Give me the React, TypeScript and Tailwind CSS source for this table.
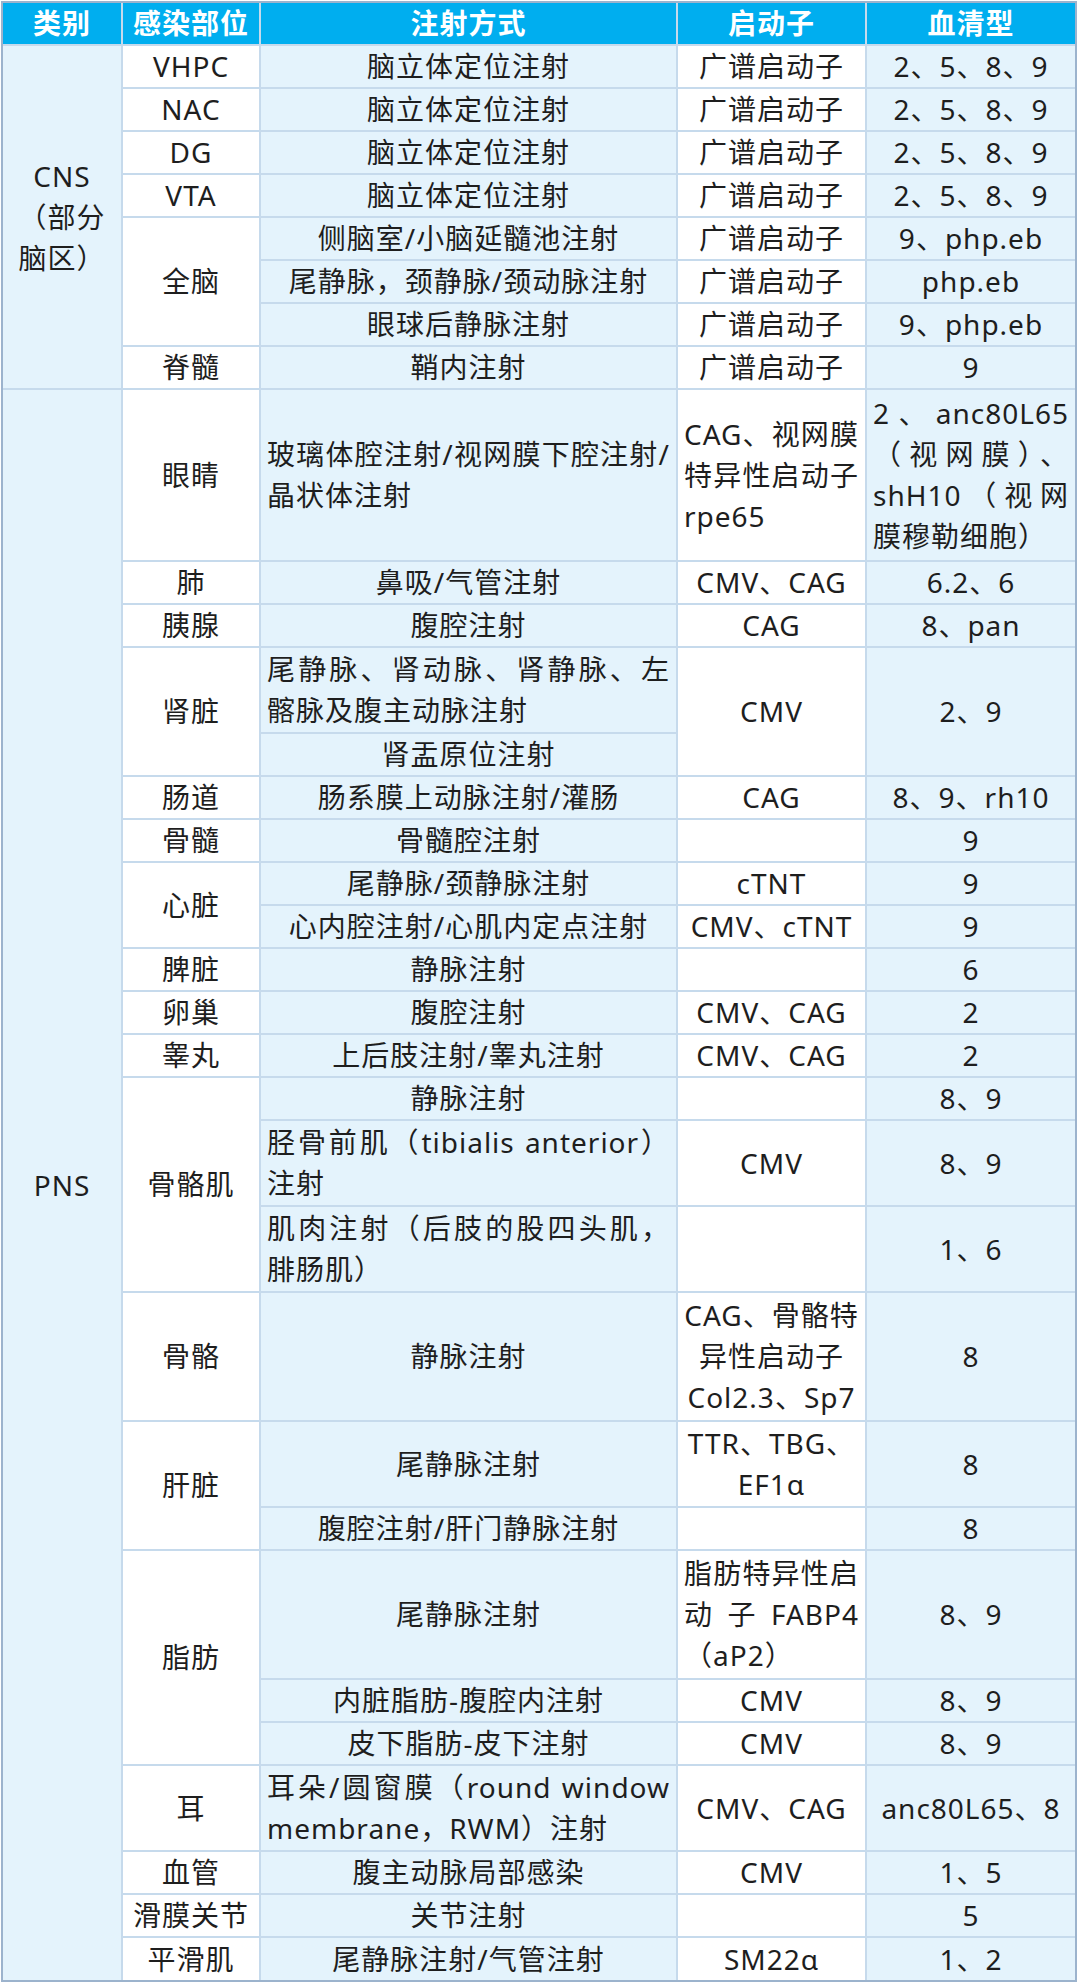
import type { JSX } from "react";

type Cell = {
  lines: string[];
  rs?: number;
  justify?: boolean;
};

type Row = {
  h: 1 | 2 | 3 | 4; // height in line units
  cells: Cell[];
};

const c = (text: string, rs?: number): Cell => ({ lines: text ? [text] : [], rs });
const m = (lines: string[], rs?: number): Cell => ({ lines, rs });
const j = (lines: string[], rs?: number): Cell => ({ lines, rs, justify: true });

const rowHeight: Record<number, string> = {
  1: "h-[43px]",
  2: "h-[86px]",
  3: "h-[129px]",
  4: "h-[172px]",
};

const stereo = (site: string): Row => ({
  h: 1,
  cells: [c(site), c("脑立体定位注射"), c("广谱启动子"), c("2、5、8、9")],
});

const rows: Row[] = [
  {
    h: 1,
    cells: [
      m(["CNS", "（部分", "脑区）"], 8),
      c("VHPC"),
      c("脑立体定位注射"),
      c("广谱启动子"),
      c("2、5、8、9"),
    ],
  },
  stereo("NAC"),
  stereo("DG"),
  stereo("VTA"),
  { h: 1, cells: [c("全脑", 3), c("侧脑室/小脑延髓池注射"), c("广谱启动子"), c("9、php.eb")] },
  { h: 1, cells: [c("尾静脉，颈静脉/颈动脉注射"), c("广谱启动子"), c("php.eb")] },
  { h: 1, cells: [c("眼球后静脉注射"), c("广谱启动子"), c("9、php.eb")] },
  { h: 1, cells: [c("脊髓"), c("鞘内注射"), c("广谱启动子"), c("9")] },

  // PNS
  {
    h: 4,
    cells: [
      c("PNS", 25),
      c("眼睛"),
      j(["玻璃体腔注射/视网膜下腔注射/", "晶状体注射"]),
      j(["CAG、视网膜", "特异性启动子", "rpe65"]),
      j(["2、anc80L65", "（视网膜）、", "shH10（视网", "膜穆勒细胞）"]),
    ],
  },
  { h: 1, cells: [c("肺"), c("鼻吸/气管注射"), c("CMV、CAG"), c("6.2、6")] },
  { h: 1, cells: [c("胰腺"), c("腹腔注射"), c("CAG"), c("8、pan")] },
  {
    h: 2,
    cells: [
      c("肾脏", 2),
      j(["尾静脉、肾动脉、肾静脉、左", "髂脉及腹主动脉注射"]),
      c("CMV", 2),
      c("2、9", 2),
    ],
  },
  { h: 1, cells: [c("肾盂原位注射")] },
  { h: 1, cells: [c("肠道"), c("肠系膜上动脉注射/灌肠"), c("CAG"), c("8、9、rh10")] },
  { h: 1, cells: [c("骨髓"), c("骨髓腔注射"), c(""), c("9")] },
  { h: 1, cells: [c("心脏", 2), c("尾静脉/颈静脉注射"), c("cTNT"), c("9")] },
  { h: 1, cells: [c("心内腔注射/心肌内定点注射"), c("CMV、cTNT"), c("9")] },
  { h: 1, cells: [c("脾脏"), c("静脉注射"), c(""), c("6")] },
  { h: 1, cells: [c("卵巢"), c("腹腔注射"), c("CMV、CAG"), c("2")] },
  { h: 1, cells: [c("睾丸"), c("上后肢注射/睾丸注射"), c("CMV、CAG"), c("2")] },
  { h: 1, cells: [c("骨骼肌", 3), c("静脉注射"), c(""), c("8、9")] },
  { h: 2, cells: [j(["胫骨前肌（tibialis anterior）", "注射"]), c("CMV"), c("8、9")] },
  { h: 2, cells: [j(["肌肉注射（后肢的股四头肌，", "腓肠肌）"]), c(""), c("1、6")] },
  {
    h: 3,
    cells: [c("骨骼"), c("静脉注射"), m(["CAG、骨骼特", "异性启动子", "Col2.3、Sp7"]), c("8")],
  },
  { h: 2, cells: [c("肝脏", 2), c("尾静脉注射"), m(["TTR、TBG、", "EF1α"]), c("8")] },
  { h: 1, cells: [c("腹腔注射/肝门静脉注射"), c(""), c("8")] },
  {
    h: 3,
    cells: [c("脂肪", 3), c("尾静脉注射"), j(["脂肪特异性启", "动子FABP4", "（aP2）"]), c("8、9")],
  },
  { h: 1, cells: [c("内脏脂肪-腹腔内注射"), c("CMV"), c("8、9")] },
  { h: 1, cells: [c("皮下脂肪-皮下注射"), c("CMV"), c("8、9")] },
  {
    h: 2,
    cells: [
      c("耳"),
      j(["耳朵/圆窗膜（round window", "membrane，RWM）注射"]),
      c("CMV、CAG"),
      c("anc80L65、8"),
    ],
  },
  { h: 1, cells: [c("血管"), c("腹主动脉局部感染"), c("CMV"), c("1、5")] },
  { h: 1, cells: [c("滑膜关节"), c("关节注射"), c(""), c("5")] },
  { h: 1, cells: [c("平滑肌"), c("尾静脉注射/气管注射"), c("SM22α"), c("1、2")] },
];

const headers = ["类别", "感染部位", "注射方式", "启动子", "血清型"];

function CellBody(props: { cell: Cell }) {
  const { lines, justify } = props.cell;
  if (lines.length <= 1) return <>{lines[0] ?? ""}</>;

  return (
    <>
      {lines.map((line, i) => {
        const last = i === lines.length - 1;
        return (
          <div
            key={i}
            className={
              justify
                ? last
                  ? "whitespace-nowrap text-left"
                  : "whitespace-nowrap text-justify [text-align-last:justify]"
                : "whitespace-nowrap text-center"
            }
          >
            {line}
          </div>
        );
      })}
    </>
  );
}

export default function App(): JSX.Element {
  return (
    <div
      lang="zh-CN"
      className="min-h-[1983px] w-[1080px] bg-white pl-[1px] pt-[1px] text-[28px] leading-[41px] tracking-[1px] text-[#1e1e1e] [font-family:'Noto_Sans','Noto_Sans_CJK_SC',sans-serif]"
    >
      <div className="w-[1076px] border-2 border-[#9cb3cd]">
        <table className="w-full table-fixed border-collapse border-hidden">
          <colgroup>
            <col className="w-[119px] bg-[#e4f3fc]" />
            <col className="w-[138px] bg-white" />
            <col className="w-[417px] bg-[#e4f3fc]" />
            <col className="w-[189px] bg-white" />
            <col className="bg-[#e4f3fc]" />
          </colgroup>
          <thead>
            <tr className="h-[42px] bg-[#00aeef]">
              {headers.map((h) => (
                <th
                  key={h}
                  className="border-2 border-[#c6daec] px-[6px] text-center align-middle font-bold text-white"
                >
                  {h}
                </th>
              ))}
            </tr>
          </thead>
          <tbody>
            {rows.map((r, ri) => (
              <tr key={ri} className={rowHeight[r.h]}>
                {r.cells.map((cell, ci) => (
                  <td
                    key={ci}
                    rowSpan={cell.rs}
                    className="border-2 border-[#c6daec] px-[6px] py-0 text-center align-middle"
                  >
                    <CellBody cell={cell} />
                  </td>
                ))}
              </tr>
            ))}
          </tbody>
        </table>
      </div>
    </div>
  );
}
